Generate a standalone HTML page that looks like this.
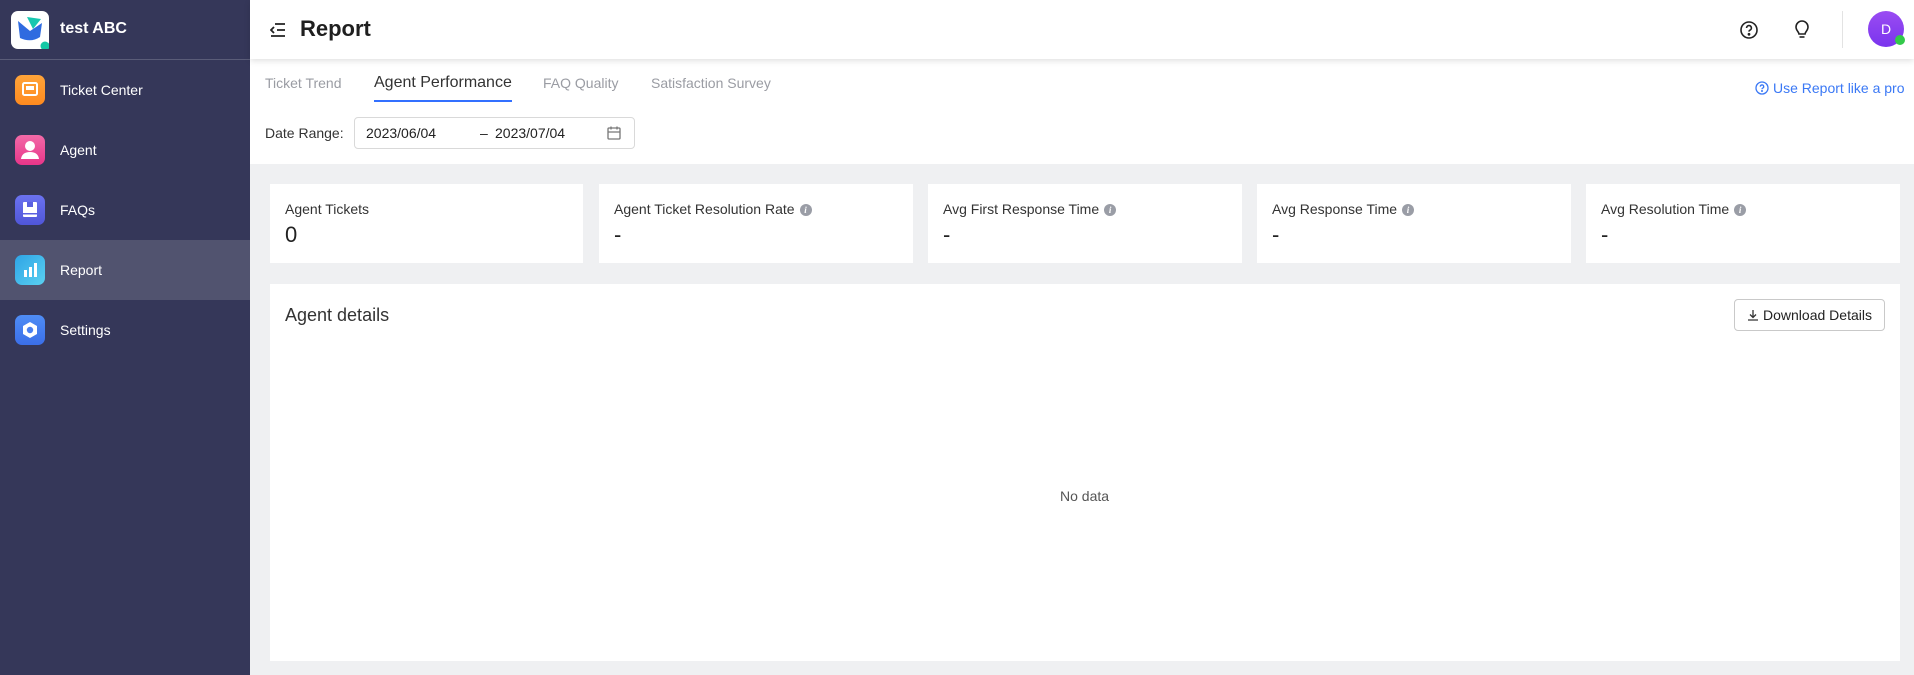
<!DOCTYPE html>
<html><head><meta charset="utf-8"><style>
*{box-sizing:border-box;margin:0;padding:0}
body{width:1914px;height:675px;overflow:hidden;font-family:"Liberation Sans",sans-serif;background:#fff;position:relative}
.sb{position:absolute;left:0;top:0;width:250px;height:675px;background:#353759;color:#fff}
.logo{position:absolute;left:11px;top:11px;width:38px;height:38px;border-radius:7px;background:#fff}
.brand{position:absolute;left:60px;top:20px;font-size:16px;font-weight:bold}
.sbline{position:absolute;left:0;top:59px;width:250px;height:1px;background:#5a5c78}
.mi{position:absolute;left:0;width:250px;height:60px}
.mi .ic{position:absolute;left:15px;top:15px;width:30px;height:30px;border-radius:7px}
.mi span{position:absolute;left:60px;top:22px;font-size:14px}
.hdr{position:absolute;left:250px;top:0;right:0;height:59px;background:#fff;box-shadow:0 2px 6px rgba(0,0,0,.12);z-index:2}
.tab{position:absolute;top:75px;font-size:14px;color:#9a9ca3}
.gray{position:absolute;left:250px;top:164px;right:0;bottom:0;background:#eff0f2}
.card{position:absolute;top:184px;height:79px;background:#fff}
.card .t{position:absolute;left:15px;top:17px;font-size:14px;color:#333}
.card .v{position:absolute;left:15px;top:38px;font-size:22px;color:#222}
.i{display:inline-block;width:12px;height:12px;border-radius:50%;background:#9a9da6;color:#fff;font-size:9px;text-align:center;line-height:12px;font-style:italic;font-weight:bold;vertical-align:1px;margin-left:5px;font-family:"Liberation Serif",serif}
</style></head><body>
<div class="sb">
<div class="logo"><svg width="38" height="38" viewBox="0 0 38 38"><path d="M7 10 L19 20 L31 12 L29 26 Q20 32 9 27 Z" fill="#2f6be0"/><path d="M16 6 L30 8 L22 18 Z" fill="#17c7b0"/><circle cx="34" cy="35" r="4.5" fill="#13c8a6"/></svg></div>
<div class="brand">test ABC</div>
<div class="sbline"></div>
<div class="mi" style="top:60px"><div class="ic" style="background:linear-gradient(#ffa43a,#ff8a1f)"><svg width="30" height="30"><rect x="8" y="8" width="14" height="12" rx="1.5" fill="none" stroke="#fff" stroke-width="2"/><rect x="11" y="11" width="8" height="4" fill="#fff"/></svg></div><span>Ticket Center</span></div>
<div class="mi" style="top:120px"><div class="ic" style="background:linear-gradient(#f26aa8,#e8358a)"><svg width="30" height="30"><circle cx="15" cy="11" r="5" fill="#fff"/><path d="M6 24 Q7 17 15 17 Q23 17 24 24Z" fill="#fff"/></svg></div><span>Agent</span></div>
<div class="mi" style="top:180px"><div class="ic" style="background:linear-gradient(#6b72f0,#5056d8)"><svg width="30" height="30"><rect x="8" y="7" width="14" height="15" rx="1" fill="#fff"/><rect x="12" y="7" width="6" height="5" fill="#5a60e0"/><rect x="8" y="18" width="14" height="1.5" fill="#5a60e0"/></svg></div><span>FAQs</span></div>
<div class="mi" style="top:240px;background:#51536f"><div class="ic" style="background:linear-gradient(135deg,#2ea4e6,#5ad0f0)"><svg width="30" height="30"><rect x="9" y="15" width="3" height="7" fill="#fff"/><rect x="14" y="12" width="3" height="10" fill="#fff"/><rect x="19" y="8" width="3" height="14" fill="#fff"/></svg></div><span>Report</span></div>
<div class="mi" style="top:300px"><div class="ic" style="background:linear-gradient(#4f8df5,#3b6fe8)"><svg width="30" height="30"><path d="M15 7 L22 11 L22 19 L15 23 L8 19 L8 11Z" fill="#fff"/><circle cx="15" cy="15" r="3.2" fill="#4a80f0"/></svg></div><span>Settings</span></div>
</div>
<div class="hdr">
<svg style="position:absolute;left:20px;top:22px" width="16" height="16" viewBox="0 0 16 16" fill="none" stroke="#222" stroke-width="1.8"><path d="M5 2h10M7 8h8M1 14h14M4 5L1 8l3 3"/></svg>
<div style="position:absolute;left:50px;top:16px;font-size:22px;font-weight:bold;color:#1f1f1f">Report</div>
<svg style="position:absolute;left:1489px;top:20px" width="20" height="20" viewBox="0 0 20 20" fill="none" stroke="#222" stroke-width="1.6"><circle cx="10" cy="10" r="8"/><path d="M7.6 8a2.4 2.4 0 1 1 3.2 2.2c-.6.3-.8.7-.8 1.4"/><circle cx="10" cy="14.3" r=".6" fill="#222"/></svg>
<svg style="position:absolute;left:1542px;top:19px" width="20" height="22" viewBox="0 0 20 22" fill="none" stroke="#222" stroke-width="1.6"><path d="M7 15c0-2-3-3.5-3-7a6 6 0 0 1 12 0c0 3.5-3 5-3 7z"/><path d="M7.5 18h5"/></svg>
<div style="position:absolute;left:1592px;top:11px;width:1px;height:37px;background:#e3e3e3"></div>
<div style="position:absolute;left:1618px;top:11px;width:36px;height:36px;border-radius:50%;background:linear-gradient(#9a4cf2,#7a34ee);color:#fff;font-size:14px;text-align:center;line-height:36px">D</div>
<div style="position:absolute;left:1645px;top:35px;width:10px;height:10px;border-radius:50%;background:#33c94a"></div>
</div>
<div class="tab" style="left:265px">Ticket Trend</div>
<div class="tab" style="left:374px;color:#333;font-size:16px;top:74px">Agent Performance</div>
<div style="position:absolute;left:374px;top:100px;width:138px;height:2px;background:#3370ff"></div>
<div class="tab" style="left:543px">FAQ Quality</div>
<div class="tab" style="left:651px">Satisfaction Survey</div>
<svg style="position:absolute;left:1755px;top:81px" width="14" height="14" viewBox="0 0 14 14" fill="none" stroke="#3a78f5" stroke-width="1.3"><circle cx="7" cy="7" r="6"/><path d="M5.3 5.6a1.7 1.7 0 1 1 2.3 1.6c-.4.2-.6.5-.6 1"/><circle cx="7" cy="10" r=".4" fill="#3a78f5"/></svg>
<div style="position:absolute;left:1773px;top:80px;font-size:14px;color:#3a78f5">Use Report like a pro</div>
<div style="position:absolute;left:265px;top:125px;font-size:14px;color:#333">Date Range:</div>
<div style="position:absolute;left:354px;top:117px;width:281px;height:32px;border:1px solid #d9d9d9;border-radius:4px;font-size:14px;color:#222">
<span style="position:absolute;left:11px;top:7px">2023/06/04</span>
<span style="position:absolute;left:125px;top:7px">–</span>
<span style="position:absolute;left:140px;top:7px">2023/07/04</span>
<svg style="position:absolute;left:252px;top:8px" width="14" height="14" viewBox="0 0 14 14" fill="none" stroke="#777" stroke-width="1.3"><rect x="1" y="2" width="12" height="11" rx="1"/><path d="M1 6h12M4 0.5v3M10 0.5v3"/></svg>
</div>
<div class="gray"></div>
<div class="card" style="left:270px;width:313px"><div class="t">Agent Tickets</div><div class="v">0</div></div>
<div class="card" style="left:599px;width:314px"><div class="t">Agent Ticket Resolution Rate<span class="i">i</span></div><div class="v">-</div></div>
<div class="card" style="left:928px;width:314px"><div class="t">Avg First Response Time<span class="i">i</span></div><div class="v">-</div></div>
<div class="card" style="left:1257px;width:314px"><div class="t">Avg Response Time<span class="i">i</span></div><div class="v">-</div></div>
<div class="card" style="left:1586px;width:314px"><div class="t">Avg Resolution Time<span class="i">i</span></div><div class="v">-</div></div>
<div style="position:absolute;left:270px;top:284px;width:1630px;height:377px;background:#fff">
<div style="position:absolute;left:15px;top:21px;font-size:18px;color:#333">Agent details</div>
<div style="position:absolute;left:1464px;top:15px;width:151px;height:32px;border:1px solid #c9c9c9;border-radius:4px;font-size:14px;color:#222;line-height:30px;text-align:center"><svg width="12" height="12" viewBox="0 0 12 12" fill="none" stroke="#333" stroke-width="1.3" style="vertical-align:-1px;margin-right:4px"><path d="M6 1v7M3 5.5L6 8.5 9 5.5M1 11h10"/></svg>Download Details</div>
<div style="position:absolute;left:790px;top:204px;font-size:14px;color:#555">No data</div>
</div>
</body></html>
